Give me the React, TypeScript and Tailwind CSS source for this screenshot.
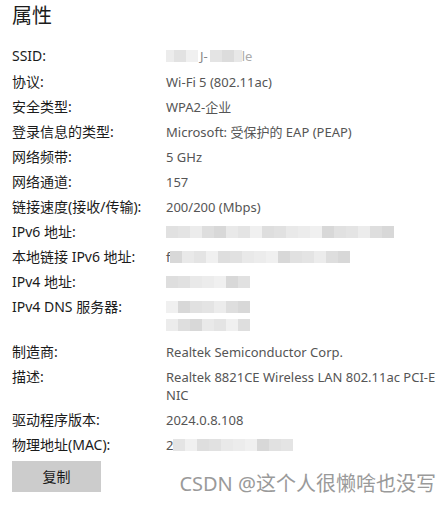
import React from 'react';

const shades = [
  'bg-[#e9e9e9]',
  'bg-[#dedede]',
  'bg-[#e4e4e4]',
  'bg-[#d8d8d8]',
  'bg-[#ececec]',
  'bg-[#e1e1e1]',
  'bg-[#f0f0f0]',
];

function Mosaic({ n, seed = 0, lead, tail }: { n: number; seed?: number; lead?: string; tail?: string }) {
  const blocks = Array.from({ length: n }, (_, i) => shades[(i * 3 + seed * 5 + ((i * i) % 4)) % shades.length]);
  return (
    <span className="inline-flex items-center h-[18px] align-top">
      {lead && <span className="text-[#555]">{lead}</span>}
      <span className="flex h-[12px]">
        {blocks.map((c, i) => (
          <span key={i} className={`w-3 h-[12px] ${c}`} />
        ))}
      </span>
      {tail && <span className="text-[#bbb]">{tail}</span>}
    </span>
  );
}

type Row = { label: string; value: React.ReactNode };

const rowsTop: Row[] = [
  {
    label: 'SSID:',
    value: (
      <span className="inline-flex items-center h-[18px]">
        <span className="flex h-[12px]">
          <span className="w-2 bg-[#ececec]" />
          <span className="w-3 bg-[#e2e2e2]" />
          <span className="w-3 bg-[#f0f0f0]" />
        </span>
        <span className="text-[#888] px-[2px]">J-</span>
        <span className="flex h-[12px]">
          <span className="w-3 bg-[#e4e4e4]" />
          <span className="w-3 bg-[#dcdcdc]" />
          <span className="w-2 bg-[#e8e8e8]" />
        </span>
        <span className="text-[#aaa]">le</span>
      </span>
    ),
  },
  { label: '协议:', value: 'Wi-Fi 5 (802.11ac)' },
  { label: '安全类型:', value: 'WPA2-企业' },
  { label: '登录信息的类型:', value: 'Microsoft: 受保护的 EAP (PEAP)' },
  { label: '网络频带:', value: '5 GHz' },
  { label: '网络通道:', value: '157' },
  { label: '链接速度(接收/传输):', value: '200/200 (Mbps)' },
  { label: 'IPv6 地址:', value: <Mosaic n={19} seed={1} /> },
  { label: '本地链接 IPv6 地址:', value: <Mosaic n={15} seed={2} lead="f" /> },
  { label: 'IPv4 地址:', value: <Mosaic n={7} seed={3} /> },
  {
    label: 'IPv4 DNS 服务器:',
    value: (
      <div className="flex flex-col">
        <Mosaic n={7} seed={4} />
        <div className="h-[18px] flex items-center">
          <Mosaic n={7} seed={5} />
        </div>
      </div>
    ),
  },
];

const rowsBottom: Row[] = [
  { label: '制造商:', value: 'Realtek Semiconductor Corp.' },
  { label: '描述:', value: 'Realtek 8821CE Wireless LAN 802.11ac PCI-E NIC' },
  { label: '驱动程序版本:', value: '2024.0.8.108' },
  { label: '物理地址(MAC):', value: <Mosaic n={10} seed={6} lead="2" /> },
];

function PropRow({ row }: { row: Row }) {
  return (
    <div className="grid grid-cols-[154px_276px] mb-[7px]">
      <div className="text-[#1b1b1b]">{row.label}</div>
      <div className="text-[#555] text-[13px] break-words">{row.value}</div>
    </div>
  );
}

export default function App() {
  return (
    <div
      className="relative w-[448px] h-[506px] bg-white overflow-hidden px-3 text-[14px] leading-[18px]"
      style={{ fontFamily: '"Noto Sans", "Noto Sans CJK SC", sans-serif' }}
    >
      <h1 className="pt-[2px] text-[20px] leading-[28px] text-[#1b1b1b] mb-[17px]">属性</h1>

      {rowsTop.map((r) => (
        <PropRow key={r.label} row={r} />
      ))}
      <div className="h-[2px]" />
      {rowsBottom.map((r) => (
        <PropRow key={r.label} row={r} />
      ))}

      <button className="w-[89px] h-[31px] bg-[#cccccc] text-[#1b1b1b] text-[14px]">复制</button>

      {/* watermark */}
      <div className="absolute right-[12px] top-[470px] text-[20px] leading-[28px] text-[#9a9a9a] [text-shadow:0_0_1px_#fff]">
        CSDN @这个人很懒啥也没写
      </div>
    </div>
  );
}
